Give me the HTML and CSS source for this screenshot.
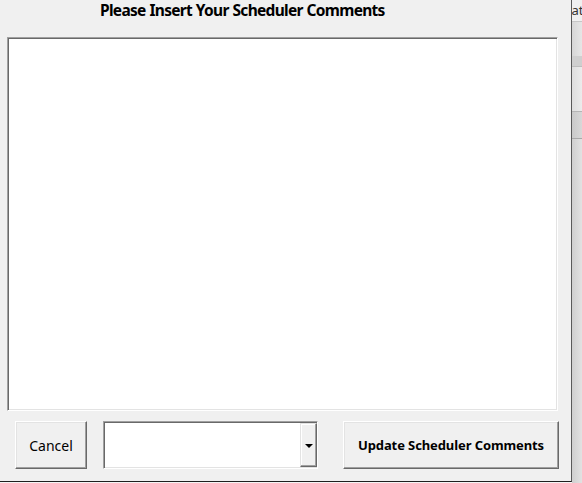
FILE: index.html
```html
<!DOCTYPE html>
<html>
<head>
<meta charset="utf-8">
<link rel="stylesheet" href="styles.css">
</head>
<body>
<div class="screen">
  <div class="dialog">
    <div class="title">Please Insert Your Scheduler Comments</div>
    <div class="memo"></div>
    <div class="actions">
      <div class="btn cancel">Cancel</div>
      <div class="combo">
        <div class="combo-field"></div>
        <div class="combo-btn"><span class="arrow"></span></div>
      </div>
      <div class="btn update">Update Scheduler Comments</div>
    </div>
  </div>
  <div class="strip">
    <div class="s1"><span class="s1-text">Data</span></div>
    <div class="s2"></div>
    <div class="s3"></div>
    <div class="s4"></div>
    <div class="s5"></div>
    <div class="s6"></div>
  </div>
</div>
</body>
</html>
```
FILE: styles.css
```css
html, body {
  margin: 0;
  padding: 0;
  background: #f4f4f4;
  width: 582px;
  height: 483px;
  overflow: hidden;
}
.screen {
  display: flex;
  height: 482px;
}
.dialog {
  width: 571px;
  height: 481px;
  background: #f0f0f0;
  border-right: 1px solid #5a5a5a;
  border-bottom: 1px solid #1e1e1e;
  display: flex;
  flex-direction: column;
  font-family: "Noto Sans", "Open Sans", sans-serif;
}
.title {
  height: 37px;
  box-sizing: border-box;
  padding-left: 100px;
  padding-top: 1px;
  font-weight: bold;
  font-size: 15.5px;
  line-height: 19px;
  color: #000;
  letter-spacing: -0.7px;
  word-spacing: 0.5px;
  white-space: nowrap;
}
.memo {
  margin-left: 7px;
  width: 551px;
  height: 374px;
  box-sizing: border-box;
  background: #fff;
  border: 1px solid;
  border-color: #a0a0a0 #ffffff #ffffff #a0a0a0;
  box-shadow: inset 1px 1px 0 #696969, inset -1px -1px 0 #e3e3e3;
}
.actions {
  display: flex;
  margin-top: 10px;
  height: 48px;
}
.btn {
  box-sizing: border-box;
  height: 48px;
  background: #f0f0f0;
  border: 1px solid;
  border-color: #ffffff #696969 #696969 #ffffff;
  box-shadow: inset -1px -1px 0 #a0a0a0, inset 1px 1px 0 #e3e3e3;
  display: flex;
  align-items: center;
  justify-content: center;
  color: #000;
}
.cancel {
  margin-left: 15px;
  width: 72px;
  font-size: 14px;
}
.update {
  margin-left: 25px;
  width: 216px;
  font-size: 13px;
  font-weight: bold;
  letter-spacing: -0.1px;
}
.combo {
  margin-left: 16px;
  width: 215px;
  height: 48px;
  box-sizing: border-box;
  background: #fff;
  border: 1px solid;
  border-color: #a0a0a0 #ffffff #ffffff #a0a0a0;
  box-shadow: inset 1px 1px 0 #696969, inset -1px -1px 0 #e3e3e3;
  display: flex;
  padding: 1px 0 1px 1px;
}
.combo-field {
  flex: 1;
}
.combo-btn {
  width: 17px;
  box-sizing: border-box;
  background: #f0f0f0;
  border: 1px solid;
  border-color: #e3e3e3 #696969 #696969 #e3e3e3;
  box-shadow: inset -1px -1px 0 #a0a0a0, inset 1px 1px 0 #ffffff;
  display: flex;
  align-items: center;
  justify-content: center;
}
.arrow {
  width: 0;
  height: 0;
  border-left: 4px solid transparent;
  border-right: 4px solid transparent;
  border-top: 4px solid #000;
  margin-top: 1px;
}
.strip {
  width: 10px;
  height: 483px;
  display: flex;
  flex-direction: column;
  background: linear-gradient(to right, #cfcfcf, #e2e2e2);
  overflow: hidden;
}
.s1 {
  height: 21px;
  background: #f0f0f0;
  border-bottom: 1px solid #c6c6c6;
  position: relative;
  overflow: hidden;
  font-family: "Noto Sans", sans-serif;
  font-size: 13px;
  color: #333;
}
.s1-text {
  position: absolute;
  left: -10px;
  top: 1px;
}
.s2 {
  height: 34px;
  background: linear-gradient(to right, #d6d6d6, #e6e6e6);
}
.s3 {
  height: 10px;
  background: #cfcfcf;
  border-bottom: 1px solid #bdbdbd;
}
.s4 {
  height: 44px;
  background: linear-gradient(to right, #dedede, #ececec);
  border-bottom: 1px solid #b5b5b5;
}
.s5 {
  height: 26px;
  background: linear-gradient(to right, #c9c9c9, #d8d8d8);
  border-bottom: 1px solid #a8a8a8;
}
.s6 {
  flex: 1;
}
```
